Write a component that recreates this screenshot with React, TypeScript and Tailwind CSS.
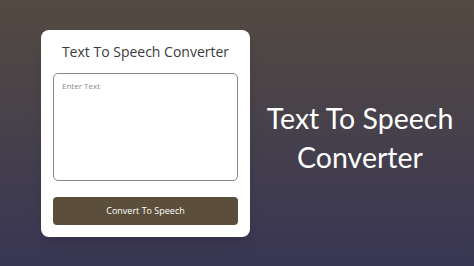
export default function App() {
  return (
    <div className="flex h-[266px] w-full items-center bg-gradient-to-b from-[#544a41] to-[#393654]">
      {/* Card */}
      <div className="ml-[41px] flex h-[207px] w-[209px] flex-col rounded-[8px] bg-white px-[12px] pt-[12px] shadow-lg" style={{ fontFamily: '"Open Sans", sans-serif' }}>
        <h1 className="mb-[11px] text-center text-[14px] leading-[20px] text-[#3a3a3a]">Text To Speech Converter</h1>
        <textarea
          placeholder="Enter Text"
          className="h-[108px] w-full resize-none rounded-[5px] border border-[#8a8a8a] px-[8px] py-[6px] text-[8px] text-[#333] placeholder-[#8a8a8a] outline-none"
        />
        <button className="mt-[16px] h-[28px] w-full rounded-[4px] bg-[#5b4f3c] text-[9px] font-medium text-white">
          Convert To Speech
        </button>
      </div>

      {/* Heading */}
      <div className="mt-[9px] flex flex-1 justify-center pr-[4px]">
        <h2 className="text-center text-[28.5px] leading-[39px] text-white" style={{ fontFamily: 'Lato, sans-serif' }}>
          Text To Speech
          <br />
          Converter
        </h2>
      </div>
    </div>
  );
}
